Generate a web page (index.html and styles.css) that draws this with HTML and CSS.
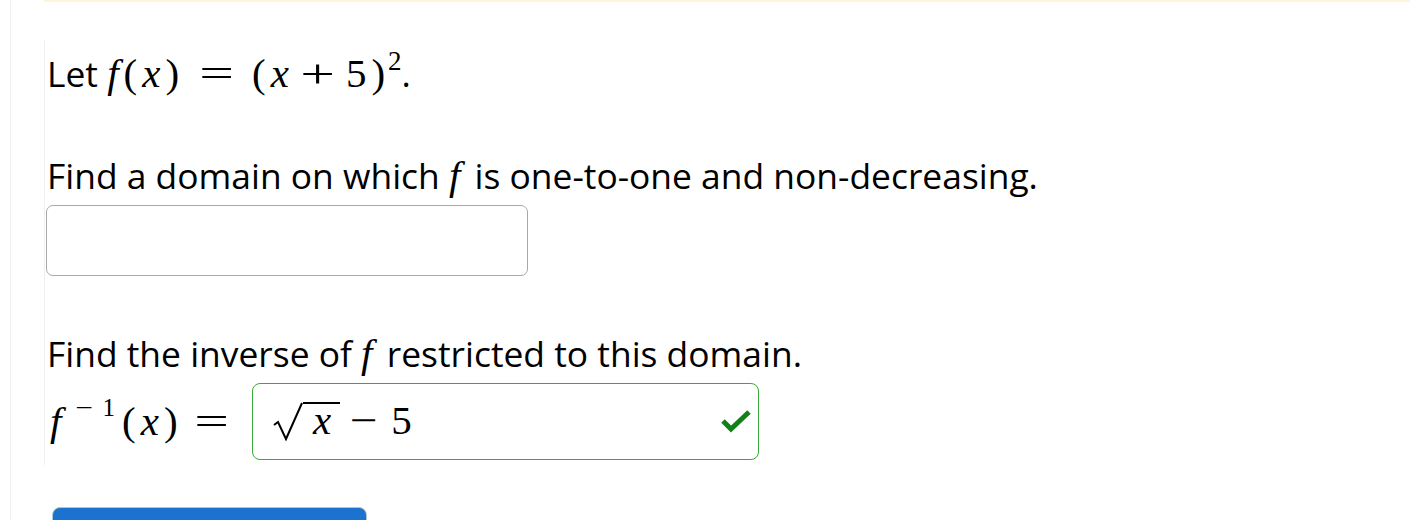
FILE: index.html
```html
<!DOCTYPE html>
<html lang="en">
<head>
  <meta charset="UTF-8" />
  <title>Inverse Function</title>
  <link rel="stylesheet" href="styles.css">
</head>
<body>
  <div class="page">
    <div class="notice"></div>

    <div class="question">
      <p class="line first">Let <span class="math"><i>f</i>(<i>x</i>)<span class="rel"><span class="op">=</span></span>(<i>x</i><span class="bin"><span class="op">+</span></span>5)<sup>2</sup></span>.</p>

      <p class="line">Find a domain on which <span class="math"><i>f</i></span> is one-to-one and non-decreasing.</p>
      <div class="answer-box"></div>

      <p class="line third">Find the inverse of <span class="math"><i>f</i></span> restricted to this domain.</p>
      <div class="answer-row">
        <span class="math lhs"><i>f</i><sup><span class="op">−</span>1</sup>(<i>x</i>)<span class="rel"><span class="op">=</span></span></span>
        <div class="answer-box correct">
          <span class="math"><span class="sqrt"><svg class="radical" width="30" height="42" viewBox="0 0 30 42"><path d="M1 23 L5 20 L13 37 L29 1" fill="none" stroke="#000" stroke-width="2"/></svg><span class="radicand"><i>x</i></span></span><span class="bin"><span class="op">−</span></span>5</span>
          <svg class="check" width="32" height="26" viewBox="0 0 32 26">
            <polyline points="3,13 11,21 29,4" fill="none" stroke="#12801a" stroke-width="5"/>
          </svg>
        </div>
      </div>
    </div>

    <button class="submit"></button>
  </div>
</body>
</html>
```

FILE: styles.css
```css
* {
  box-sizing: border-box;
}

body {
  margin: 0;
  font-family: 'Open Sans', 'Noto Sans', sans-serif;
  background: #fff;
  color: #000;
  overflow: hidden;
}

.page {
  margin-left: 10px;
  border-left: 1px solid #f1f1f1;
  padding-left: 33px;
  height: 520px;
}

.notice {
  height: 2px;
  background: #fff5da;
}

.question {
  margin-top: 38px;
  border-left: 1px solid #f0f0f0;
  padding: 9px 0 5px 2px;
}

.line {
  margin: 0;
  font-size: 35.4px;
  line-height: 48px;
}

.line.first {
  margin-bottom: 54px;
}

.line.third {
  margin-top: 53px;
}

.math {
  font-family: 'Liberation Serif', 'DejaVu Serif', serif;
  font-size: 41px;
  line-height: 1;
  letter-spacing: 5px;
  white-space: nowrap;
}

.math i {
  font-style: italic;
}

.math sup {
  font-size: 27px;
  line-height: 0;
  vertical-align: 17px;
  margin-left: -2px;
  letter-spacing: 0;
}

/* wider operators, like the TeX ones */
.rel,
.bin {
  display: inline-block;
  width: 34px;
  text-align: center;
  letter-spacing: 0;
}

.op {
  display: inline-block;
  transform: scaleX(1.5);
}

.rel {
  margin: 0 19px 0 15px;
}

.bin {
  margin: 0 11px 0 7px;
}

.answer-box {
  width: 482px;
  height: 71px;
  margin: 6px 0 0 -1px;
  border: 1px solid #a8a8a8;
  border-radius: 7px;
}

.answer-row {
  display: flex;
  align-items: center;
  margin-top: 6px;
}

.lhs {
  padding-left: 3px;
  width: 205px;
}

.lhs sup {
  font-size: 25px;
  vertical-align: 19px;
  margin-left: 12px;
  letter-spacing: 7px;
}

.lhs sup .op {
  transform: scaleX(1.25);
  margin-right: 3px;
}

.lhs .rel {
  margin-left: 12px;
}

.answer-box.correct {
  width: 507px;
  height: 77px;
  margin: 0;
  border: 1.5px solid #3aa93a;
  border-radius: 8px;
  display: flex;
  align-items: center;
  justify-content: space-between;
  padding: 0 6px 0 20px;
}

.radical {
  vertical-align: -10px;
}

.radicand {
  display: inline-block;
  border-top: 2px solid #000;
  line-height: 32px;
  padding: 0 4px 0 10px;
}

.correct .bin {
  margin: 0 11px 0 6px;
}

.correct .op {
  transform: scaleX(1.2);
}

.check {
  margin-top: -2px;
}

.submit {
  display: block;
  margin: 42px 0 0 8px;
  width: 315px;
  height: 60px;
  background: #1b73cf;
  border: 1px solid #b9c4d0;
  border-radius: 8px;
}
```
